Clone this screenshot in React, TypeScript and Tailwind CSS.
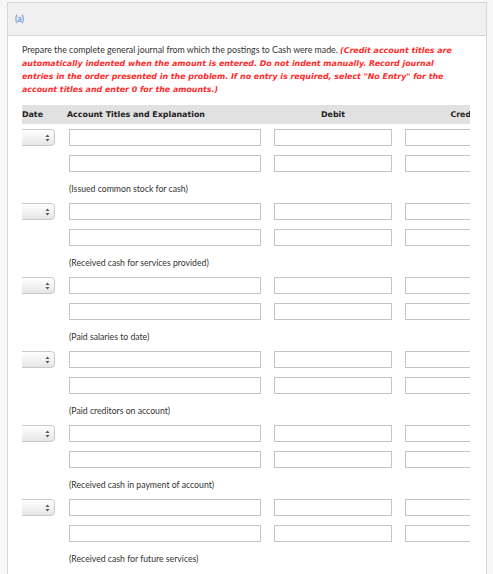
import React from 'react';

const ENTRIES = [
  '(Issued common stock for cash)',
  '(Received cash for services provided)',
  '(Paid salaries to date)',
  '(Paid creditors on account)',
  '(Received cash in payment of account)',
  '(Received cash for future services)',
];

function DateSelect() {
  return (
    <div className="-ml-[8px] w-[41px] h-[17px] rounded-[4px] border border-[#c9c9c9] bg-gradient-to-b from-[#ffffff] to-[#e6e6e6] flex items-center justify-end pr-[4px]">
      <svg width="5" height="8" viewBox="0 0 5 8">
        <path d="M2.5 0.5 L4.5 3 L0.5 3 Z" fill="#555" />
        <path d="M2.5 7.5 L4.5 5 L0.5 5 Z" fill="#555" />
      </svg>
    </div>
  );
}

function Box({ w }: { w: string }) {
  return <div className={`${w} h-[17px] shrink-0 border border-[#c4c4c4] bg-white`} />;
}

function Row({ withDate }: { withDate: boolean }) {
  return (
    <div className="flex items-center h-[26px] pt-[5px] pb-[4px]">
      <div className="w-[47px] shrink-0">{withDate && <DateSelect />}</div>
      <Box w="w-[192px]" />
      <div className="w-[13px] shrink-0" />
      <Box w="w-[118px]" />
      <div className="w-[13px] shrink-0" />
      <Box w="w-[118px]" />
    </div>
  );
}

export default function App() {
  return (
    <div className="w-[493px] h-[574px] overflow-hidden bg-[#f7f7f7] pt-[2px] pl-[7px] font-['Lato','Open_Sans',sans-serif]">
      <div className="w-[480px] h-[600px] border border-[#d6d6d6] bg-white">
        {/* Part header */}
        <div className="h-[33px] bg-[#f0f0f0] border-b border-[#d6d6d6] flex items-center pl-[7px]">
          <span className="text-[9px] text-[#4a7bd3]">(a)</span>
        </div>

        <div className="pl-[14px]">
          <p className="pt-[8px] pr-[20px] text-[8.8px] leading-[12px] text-[#333]">
            Prepare the complete general journal from which the postings to Cash were made.{' '}
            <span className="font-['DejaVu_Sans',sans-serif] text-[7.9px] leading-[12px] font-bold italic text-[#ff2b2b]">
              (Credit account titles are automatically indented when the amount is entered. Do not indent manually. Record journal entries in the order presented in the problem. If no entry is required, select "No Entry" for the account titles and enter 0 for the amounts.)
            </span>
          </p>

          {/* Journal table */}
          <div className="mt-[9px] w-[448px] overflow-hidden">
            <div className="w-[520px]">
              <div className="flex items-center h-[19px] bg-[#e1e1e1] font-['DejaVu_Sans',sans-serif] text-[7.9px] font-bold text-[#222]">
                <div className="w-[45px] shrink-0">Date</div>
                <div className="w-[207px] shrink-0">Account Titles and Explanation</div>
                <div className="w-[118px] shrink-0 text-center">Debit</div>
                <div className="w-[13px] shrink-0" />
                <div className="w-[118px] shrink-0 text-center">Credit</div>
              </div>

              {ENTRIES.map((e) => (
                <div key={e}>
                  <Row withDate />
                  <Row withDate={false} />
                  <div className="h-[22px] flex items-center pt-[3px] pl-[47px] text-[8.7px] text-[#333]">{e}</div>
                </div>
              ))}
            </div>
          </div>
        </div>
      </div>
    </div>
  );
}
